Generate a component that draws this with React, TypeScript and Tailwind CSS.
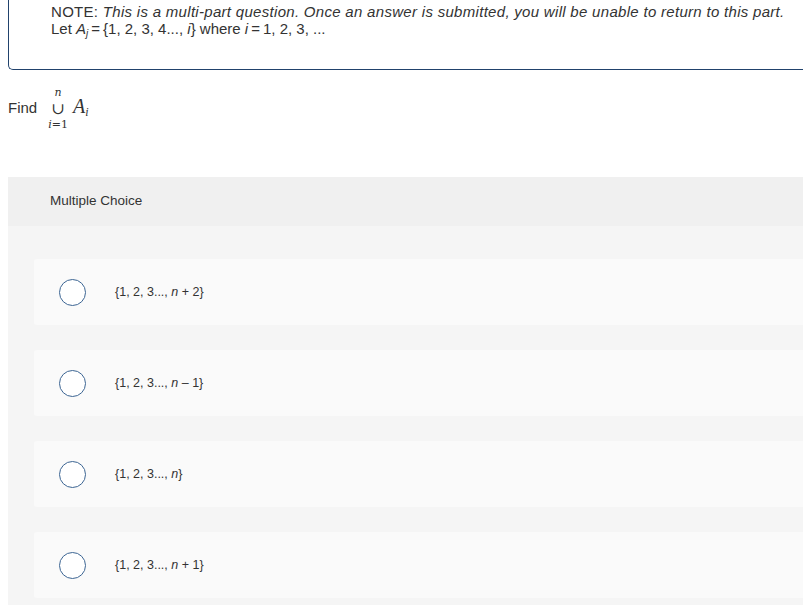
const options = [
    { id: 'a', pre: '{1, 2, 3..., ', n: 'n', post: ' + 2}' },
    { id: 'b', pre: '{1, 2, 3..., ', n: 'n', post: ' \u2013 1}' },
    { id: 'c', pre: '{1, 2, 3..., ', n: 'n', post: '}' },
    { id: 'd', pre: '{1, 2, 3..., ', n: 'n', post: ' + 1}' },
];

function Radio() {
    return <span className="block h-[27px] w-[27px] shrink-0 rounded-full border-[1.5px] border-[#3c6593] bg-white" />;
}

export default function App() {
    return (
        <div className="h-[605px] w-[803px] overflow-hidden bg-white font-['Liberation_Sans',Arial,sans-serif] text-[#333333]">
            {/* Note box */}
            <div className="ml-[8px] mr-[-20px] h-[70px] rounded-bl-[5px] border-b border-l border-[#21426c] pl-[42px] pt-[3px] text-[15px] leading-[17px]">
                <p className="tracking-[0.3px]">
                    NOTE: <i>This is a multi-part question. Once an answer is submitted, you will be unable to return to this part.</i>
                </p>
                <p>
                    Let <i>A</i>
                    <sub className="text-[10px] italic">j</sub>
                    {'\u2009=\u2009{'}1, 2, 3, 4..., <i>i</i>
                    {'}'} where <i>i</i>
                    {'\u2009=\u2009'}1, 2, 3, ...
                </p>
            </div>

            {/* Find */}
            <div className="ml-[8px] mt-[16px] flex h-[44px] items-center text-[15px]">
                <span className="mr-[11px]">Find</span>
                <span className="flex flex-col items-center font-['DejaVu_Serif','Liberation_Serif',serif] text-[#333]">
                    <i className="text-[11px] leading-[13px]">n</i>
                    <span className="text-[16px] leading-[19px]">{'\u222A'}</span>
                    <span className="text-[11px] leading-[13px]">
                        <i>i</i>=1
                    </span>
                </span>
                <span className="ml-[5px] mb-[4px] font-['Liberation_Serif',serif] text-[20px] italic">
                    A<sub className="text-[12px]">i</sub>
                </span>
            </div>

            {/* Multiple choice panel */}
            <section className="ml-[8px] mt-[47px] bg-[#f5f5f5]">
                <div className="flex h-[49px] items-center bg-[#f0f0f0] pl-[42px] text-[13.5px] text-[#333]">Multiple Choice</div>
                <div className="flex flex-col gap-[25px] pl-[26px] pt-[33px] pb-[20px]">
                    {options.map((o) => (
                        <div key={o.id} className="flex h-[66px] items-center rounded-l-[3px] bg-[#fafafa] pl-[25px]">
                            <Radio />
                            <span className="ml-[29px] text-[12.5px] text-[#333]">
                                {o.pre}
                                <i>{o.n}</i>
                                {o.post}
                            </span>
                        </div>
                    ))}
                </div>
            </section>
        </div>
    );
}
